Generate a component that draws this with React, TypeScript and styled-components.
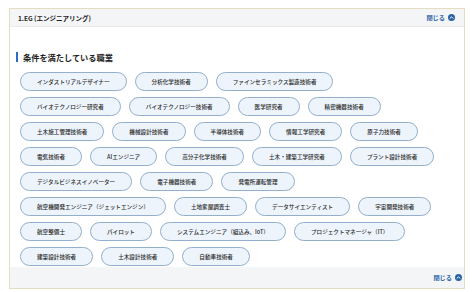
import React from "react";
import styled, { createGlobalStyle } from "styled-components";

const Global = createGlobalStyle`
  html, body { margin: 0; padding: 0; background: #ffffff; }
  body { font-family: "Noto Sans CJK JP", "Noto Sans", sans-serif; }
`;

const Panel = styled.section`
  margin: 8px 0 0 9px;
  width: 456px;
  height: 281px;
  box-sizing: border-box;
  border: 1px solid #e6dcc2;
  display: flex;
  flex-direction: column;
  background: #fff;
`;

const Bar = styled.div<{ $footer?: boolean }>`
  height: ${(p) => (p.$footer ? "21px" : "18px")};
  background: #f4f5f7;
  display: flex;
  align-items: center;
  justify-content: ${(p) => (p.$footer ? "flex-end" : "space-between")};
  padding: ${(p) => (p.$footer ? "0 2px 0 8px" : "0 9px 0 8px")};
  box-sizing: border-box;
  ${(p) => (p.$footer ? "margin-top: auto;" : "border-bottom: 1px solid #ebebeb;")}
`;

const HeaderTitle = styled.span`
  font-size: 6.5px;
  font-weight: 700;
  color: #222;
`;

const CloseLink = styled.span`
  display: flex;
  align-items: center;
  gap: 3px;
  font-size: 6.2px;
  font-weight: 700;
  color: #2a62a6;
`;

const Body = styled.div`
  padding: 24px 10px 0 6px;
  display: flex;
  flex-direction: column;
`;

const SectionTitle = styled.h2`
  margin: 0 0 9px 0;
  display: flex;
  align-items: center;
  gap: 5px;
  font-size: 8.2px;
  font-weight: 700;
  color: #222;
  line-height: 12px;
  &::before {
    content: "";
    width: 2px;
    height: 10px;
    background: #2f6bc0;
  }
`;

const PillList = styled.ul`
  list-style: none;
  margin: 0;
  padding: 0 0 0 4px;
  display: flex;
  flex-direction: column;
  row-gap: 6px;
`;

const Row = styled.li`
  display: flex;
  gap: 8px;
`;

const Pill = styled.span`
  height: 19px;
  box-sizing: border-box;
  padding: 0 16px;
  border: 1px solid #93afcc;
  border-radius: 10px;
  background: #edf4fb;
  color: #2b2b2b;
  font-size: 5.6px;
  font-weight: 500;
  display: flex;
  align-items: center;
  white-space: nowrap;
`;

const rows: string[][] = [
  ["インダストリアルデザイナー", "分析化学技術者", "ファインセラミックス製造技術者"],
  ["バイオテクノロジー研究者", "バイオテクノロジー技術者", "医学研究者", "精密機器技術者"],
  ["土木施工管理技術者", "機械設計技術者", "半導体技術者", "情報工学研究者", "原子力技術者"],
  ["電気技術者", "AIエンジニア", "高分子化学技術者", "土木・建築工学研究者", "プラント設計技術者"],
  ["デジタルビジネスイノベーター", "電子機器技術者", "発電所運転管理"],
  ["航空機開発エンジニア（ジェットエンジン）", "土地家屋調査士", "データサイエンティスト", "宇宙開発技術者"],
  ["航空整備士", "パイロット", "システムエンジニア（組込み、IoT）", "プロジェクトマネージャ（IT）"],
  ["建築設計技術者", "土木設計技術者", "自動車技術者"],
];

const UpIcon = () => (
  <svg width="7" height="7" viewBox="0 0 14 14" aria-hidden>
    <circle cx="7" cy="7" r="7" fill="#2a62a6" />
    <path d="M4 8.6 L7 5.6 L10 8.6" stroke="#fff" strokeWidth="2" fill="none" strokeLinecap="round" strokeLinejoin="round" />
  </svg>
);

export default function App() {
  return (
    <>
      <Global />
      <Panel>
        <Bar>
          <HeaderTitle>1.EG (エンジニアリング)</HeaderTitle>
          <CloseLink>
            閉じる
            <UpIcon />
          </CloseLink>
        </Bar>
        <Body>
          <SectionTitle>条件を満たしている職業</SectionTitle>
          <PillList>
            {rows.map((r, i) => (
              <Row key={i}>
                {r.map((t) => (
                  <Pill key={t}>{t}</Pill>
                ))}
              </Row>
            ))}
          </PillList>
        </Body>
        <Bar $footer>
          <CloseLink>
            閉じる
            <UpIcon />
          </CloseLink>
        </Bar>
      </Panel>
    </>
  );
}
